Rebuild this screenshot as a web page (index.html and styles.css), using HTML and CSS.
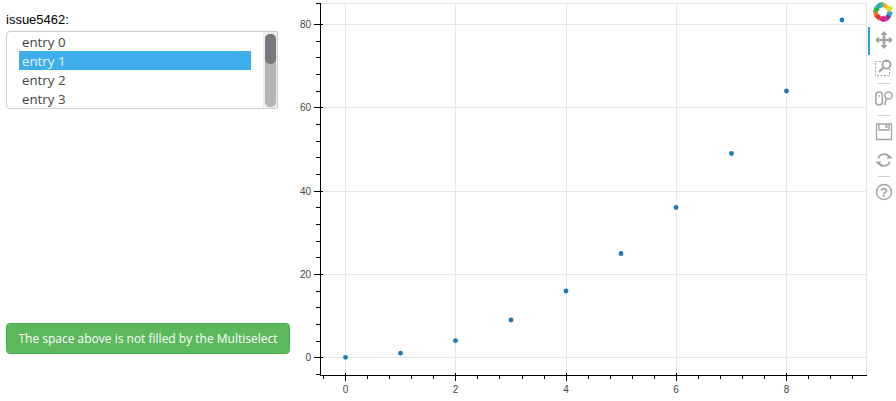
FILE: index.html
```html
<!DOCTYPE html>
<html lang="en">
<head>
<meta charset="utf-8">
<title>issue5462</title>
<link rel="stylesheet" href="styles.css">
</head>
<body>
<main class="layout">
  <section class="controls">
    <label class="field-label">issue5462:</label>
    <div class="listbox">
      <ul class="options">
        <li class="option">entry 0</li>
        <li class="option selected">entry 1</li>
        <li class="option">entry 2</li>
        <li class="option">entry 3</li>
      </ul>
      <div class="scrollbar"><div class="track"><div class="thumb"></div></div></div>
    </div>
    <button class="action" type="button">The space above is not filled by the Multiselect</button>
  </section>
  <section class="plot">
    <svg class="chart" width="546" height="401" viewBox="320 0 546 401" role="img">
      <g class="grid">
        <path d="M345.5 4V375M455.5 4V375M566.5 4V375M676.5 4V375M786.5 4V375M866.5 4V375"/>
        <path d="M321 3.5H867M321 24.5H867M321 107.5H867M321 191.5H867M321 274.5H867M321 357.5H867"/>
      </g>
      <g class="axis">
        <path d="M320.5 3V376M320 375.5H867"/>
        <path d="M314 24.5H323M314 107.5H323M314 191.5H323M314 274.5H323M314 357.5H323"/>
        <path d="M316 3.5H321M316 41.5H321M316 57.5H321M316 74.5H321M316 91.5H321M316 124.5H321M316 141.5H321M316 157.5H321M316 174.5H321M316 207.5H321M316 224.5H321M316 241.5H321M316 257.5H321M316 291.5H321M316 307.5H321M316 324.5H321M316 341.5H321M316 374.5H321"/>
        <path d="M345.5 373V381M455.5 373V381M566.5 373V381M676.5 373V381M786.5 373V381"/>
        <path d="M323.5 375V379M367.5 375V379M389.5 375V379M411.5 375V379M433.5 375V379M477.5 375V379M499.5 375V379M522.5 375V379M544.5 375V379M588.5 375V379M610.5 375V379M632.5 375V379M654.5 375V379M698.5 375V379M720.5 375V379M742.5 375V379M764.5 375V379M808.5 375V379M830.5 375V379M852.5 375V379"/>
      </g>
      <g class="labels-y">
        <text x="311" y="28">80</text>
        <text x="311" y="111">60</text>
        <text x="311" y="195">40</text>
        <text x="311" y="278">20</text>
        <text x="311" y="361">0</text>
      </g>
      <g class="labels-x">
        <text x="345.5" y="393">0</text>
        <text x="455.5" y="393">2</text>
        <text x="566" y="393">4</text>
        <text x="676" y="393">6</text>
        <text x="786.5" y="393">8</text>
      </g>
      <g class="points">
        <circle cx="345.5" cy="357.3" r="2.4"/>
        <circle cx="400.5" cy="353.2" r="2.4"/>
        <circle cx="455.5" cy="340.7" r="2.4"/>
        <circle cx="511" cy="320" r="2.4"/>
        <circle cx="566" cy="291" r="2.4"/>
        <circle cx="621" cy="253.5" r="2.4"/>
        <circle cx="676" cy="207.5" r="2.4"/>
        <circle cx="731.5" cy="153.5" r="2.4"/>
        <circle cx="786.5" cy="91" r="2.4"/>
        <circle cx="842" cy="20" r="2.4"/>
      </g>
    </svg>
  </section>
  <aside class="toolbar">
    <svg class="logo" width="20" height="20" viewBox="0 0 20 20" aria-label="Bokeh">
      <path fill="#f6a21d" d="M10 0l4.500 3-1.500 3.500-3-1.500z"/>
      <path fill="#e4d924" d="M14.500 3L20 5.500 17 10l-3-.5-1-3z"/>
      <path fill="#3d9bd8" d="M20 10l-2 5-4-1-.5-3.500 2.500-1z"/>
      <path fill="#7d3c98" d="M18 15l-3.500 4-2.500-3.500 1-2.500 1.500-.5z"/>
      <path fill="#e0178a" d="M14 19l-4 1-4-2 2-3.500 3.500-.5z"/>
      <path fill="#e8352b" d="M6 18.500L1.500 15l3-3 2 .5 1.500 2z"/>
      <path fill="#e8752b" d="M1.500 15L0 10l4-1.500 1.500 2-1 2z"/>
      <path fill="#2fae49" d="M0 10l1.500-5L6 6l.5 2.500-2.500 1z"/>
      <path fill="#26b5a8" d="M1.500 5L5.500 1 10 0v5l-3.500 1.500z"/>
      <circle cx="10" cy="10" r="3.800" fill="#fff"/>
    </svg>
    <div class="tool active">
      <svg width="18" height="18" viewBox="0 0 18 18"><path class="fill" d="M9 0l3.500 4h-2.200v3.700h3.700v-2.200l4 3.500-4 3.500v-2.200h-3.700v3.700h2.200l-3.500 4-3.500-4h2.200v-3.700h-3.700v2.200l-4-3.500 4-3.500v2.200h3.700v-3.700h-2.200z"/></svg>
    </div>
    <div class="tool">
      <svg width="18" height="18" viewBox="0 0 18 18"><rect class="dash" x=".5" y="2.500" width="14" height="14"/><circle class="line w2" cx="11.500" cy="5.500" r="4"/><path class="line w3" d="M8.500 8.500l-4.500 4.500"/></svg>
    </div>
    <div class="divider"></div>
    <div class="tool">
      <svg width="18" height="18" viewBox="0 0 18 18"><rect class="line w15" x=".8" y="2" width="6.500" height="13" rx="3.200"/><path class="line" d="M4 5v2.500"/><circle class="line w15" cx="13.500" cy="5.500" r="3.600"/><path class="line w15" d="M11.500 8.500l-2 6.500"/></svg>
    </div>
    <div class="divider wide"></div>
    <div class="tool">
      <svg width="18" height="18" viewBox="0 0 18 18"><path class="line w13" d="M1.500 1v15.500h15V1zM4 1v6h10V1"/><rect class="fill" x="10.500" y="2" width="2" height="3"/></svg>
    </div>
    <div class="tool">
      <svg width="18" height="18" viewBox="0 0 18 18"><path class="line w2" d="M3.300 7.500A6 6 0 0 1 14.500 6.500M14.700 10.500A6 6 0 0 1 3.500 11.500"/><path class="fill" d="M11.500 7.500h6l-3-3.500zM.5 10.500h6l-3 3.500z"/></svg>
    </div>
    <div class="divider wide"></div>
    <div class="tool help-tool">
      <svg width="18" height="18" viewBox="0 0 18 18"><circle class="line w15" cx="9" cy="9" r="7.500"/><text class="help" x="9" y="13.500">?</text></svg>
    </div>
  </aside>
</main>
</body>
</html>
```
FILE: styles.css
```css
* { box-sizing: border-box; }
html, body { margin: 0; padding: 0; background: #fff; overflow: hidden; }
.layout { display: flex; width: 896px; height: 401px; }
.controls { width: 320px; flex: none; padding: 12px 0 0 6px; display: flex; flex-direction: column; align-items: flex-start; }
.field-label { font: 13px/16px "Liberation Sans", Arial, sans-serif; color: #000; height: 19px; }
.listbox { width: 272px; height: 78px; border: 1px solid #ccc; border-radius: 4px 0 0 4px; display: flex; justify-content: space-between; overflow: hidden; background: #fff; }
.options { list-style: none; margin: 0; padding: 0 0 0 12px; width: 244px; flex: none; font: 13.300px/21px "Open Sans", sans-serif; color: #444; }
.option { height: 19px; padding-left: 3px; }
.option.selected { background: #3daeea; color: #e8f4fb; }
.scrollbar { width: 14px; background: #eee; padding: 2px 1px 1px 2px; flex: none; }
.track { height: 100%; background: #b5b5b5; border-radius: 5px; }
.thumb { height: 30px; background: #75787d; border-radius: 5px; }
.action { margin-top: 214px; width: 284px; height: 31px; border: 1px solid #4cae4c; border-radius: 4px; background: #5cb85c; color: #fff; font: 12px/1 "Open Sans", sans-serif; padding: 0; text-align: center; }
.plot { width: 546px; flex: none; }
.chart { display: block; overflow: visible; }
.grid path { fill: none; stroke: #e6e6e6; stroke-width: 1; }
.axis path { fill: none; stroke: #000; stroke-width: 1; }
.labels-y text, .labels-x text { font: 10px "Liberation Sans", Arial, sans-serif; fill: #444; }
.labels-y text { text-anchor: end; }
.labels-x text { text-anchor: middle; }
.points circle { fill: #1f77b4; }
.toolbar { flex: 1; display: flex; flex-direction: column; align-items: center; padding-top: 2px; padding-left: 4px; }
.logo { margin: 0 2px 4px 0; flex: none; }
.tool { width: 28px; height: 28px; flex: none; display: flex; align-items: center; justify-content: center; }
.tool.active { position: relative; }
.tool.active::before { content: ""; position: absolute; left: -2px; top: 1px; width: 2px; height: 28px; background: #26a0d8; }
.help-tool { margin-top: -1px; }
.divider { width: 12px; height: 1px; flex: none; background: #ccc; margin: 1px 0; }
.divider.wide { margin: 2px 0; }
.fill { fill: #a3a3a3; }
.line { fill: none; stroke: #a3a3a3; stroke-width: 1; }
.w13 { stroke-width: 1.3; }
.w15 { stroke-width: 1.5; }
.w2 { stroke-width: 1.8; }
.w3 { stroke-width: 2.4; }
.dash { fill: none; stroke: #a3a3a3; stroke-width: 1; stroke-dasharray: 2 1.500; }
.help { font: bold 13px "Liberation Sans", Arial, sans-serif; fill: #a3a3a3; text-anchor: middle; }
```
